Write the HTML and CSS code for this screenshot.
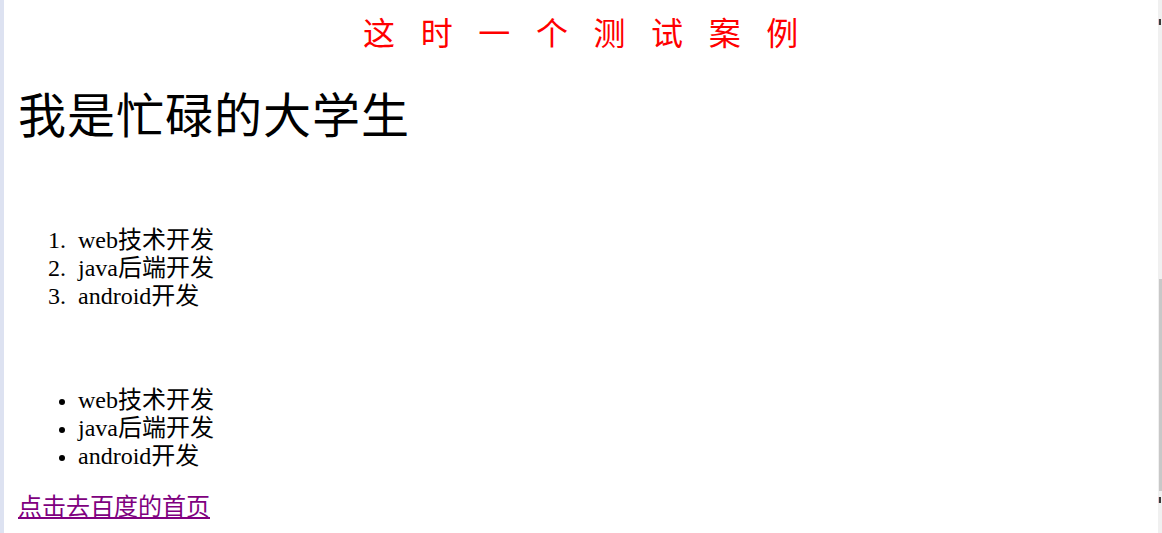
FILE: index.html
```
<!DOCTYPE html>
<html lang="zh-CN">
<head>
<meta charset="utf-8">
<title>测试案例</title>
<link rel="stylesheet" href="styles.css">
</head>
<body>
<div class="frame">
  <div class="edge"></div>
  <div class="page">
    <h2 class="title">这时一个测试案例</h2>
    <h1 class="heading">我是忙碌的大学生</h1>
    <ol class="list numbered">
      <li>web技术开发</li>
      <li>java后端开发</li>
      <li>android开发</li>
    </ol>
    <ul class="list bulleted">
      <li>web技术开发</li>
      <li>java后端开发</li>
      <li>android开发</li>
    </ul>
    <p class="linkline"><a class="link" href="#">点击去百度的首页</a></p>
  </div>
  <div class="scroll">
    <div class="arrow arrow-top"></div>
    <div class="thumb"></div>
    <div class="arrow arrow-bottom"></div>
  </div>
</div>
</body>
</html>
```
FILE: styles.css
```
html, body {
  margin: 0;
  padding: 0;
  background: #ffffff;
}

.frame {
  display: flex;
  height: 533px;
  overflow: hidden;
}

.edge {
  width: 4px;
  flex: 0 0 4px;
  background: #dde2f1;
}

.page {
  flex: 1;
  padding-left: 14px;
  min-width: 0;
}

.title {
  margin: 13px 0 0 0;
  padding-left: 11px;
  text-align: center;
  color: #ff0000;
  font-family: "Noto Sans CJK SC", sans-serif;
  font-size: 32px;
  font-weight: normal;
  line-height: 36px;
  letter-spacing: 0.8em;
}

.heading {
  margin: 35px 0 0 0;
  color: #000000;
  font-family: "Noto Sans CJK SC", sans-serif;
  font-size: 48px;
  font-weight: normal;
  line-height: 56px;
  letter-spacing: 1px;
}

.list {
  margin: 0;
  padding-left: 60px;
  font-family: "Liberation Serif", "Noto Sans CJK SC", serif;
  font-size: 24px;
  line-height: 28px;
  color: #000000;
}

.numbered {
  margin-top: 86px;
}

.numbered li::marker {
  content: counter(list-item) ".\00a0\00a0";
}

.bulleted {
  margin-top: 76px;
  list-style: none;
}

.bulleted li::before {
  content: "";
  display: inline-block;
  width: 6px;
  height: 6px;
  border-radius: 50%;
  background: #000000;
  margin-left: -19px;
  margin-right: 13px;
  vertical-align: 3px;
}

.linkline {
  margin: 23px 0 0 0;
  font-family: "Liberation Serif", "Noto Sans CJK SC", serif;
  font-size: 24px;
  line-height: 28px;
}

.link {
  color: #800080;
  text-decoration: underline;
}

.scroll {
  width: 4px;
  flex: 0 0 4px;
  background: #f0f0f0;
  display: flex;
  flex-direction: column;
  align-items: flex-end;
}

.arrow {
  width: 2px;
  height: 6px;
  margin-right: 1px;
  background: #3a3a3a;
  box-shadow: -1px 0 0 #e8c8c8;
}

.arrow-top {
  margin-top: 19px;
}

.thumb {
  margin-top: 254px;
  width: 3px;
  height: 212px;
  background: #c8c8c8;
}

.arrow-bottom {
  margin-top: 6px;
}
```
